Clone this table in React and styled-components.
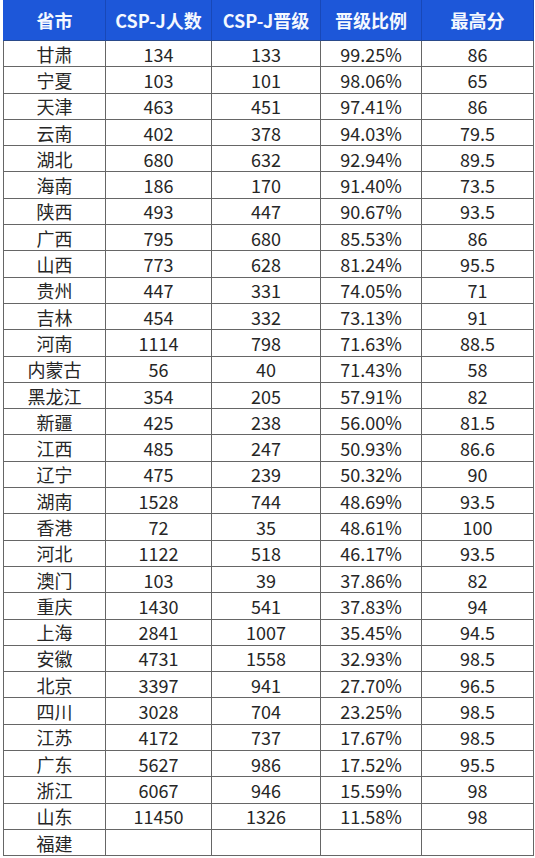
import React from "react"
import styled, { createGlobalStyle } from "styled-components"

const GlobalStyle = createGlobalStyle`
    body {
        margin: 0;
        background: white;
        font-family: "Noto Sans CJK SC", "Noto Sans", sans-serif;
    }
`

const rows = [
    ["甘肃", "134", "133", "99.25%", "86"],
    ["宁夏", "103", "101", "98.06%", "65"],
    ["天津", "463", "451", "97.41%", "86"],
    ["云南", "402", "378", "94.03%", "79.5"],
    ["湖北", "680", "632", "92.94%", "89.5"],
    ["海南", "186", "170", "91.40%", "73.5"],
    ["陕西", "493", "447", "90.67%", "93.5"],
    ["广西", "795", "680", "85.53%", "86"],
    ["山西", "773", "628", "81.24%", "95.5"],
    ["贵州", "447", "331", "74.05%", "71"],
    ["吉林", "454", "332", "73.13%", "91"],
    ["河南", "1114", "798", "71.63%", "88.5"],
    ["内蒙古", "56", "40", "71.43%", "58"],
    ["黑龙江", "354", "205", "57.91%", "82"],
    ["新疆", "425", "238", "56.00%", "81.5"],
    ["江西", "485", "247", "50.93%", "86.6"],
    ["辽宁", "475", "239", "50.32%", "90"],
    ["湖南", "1528", "744", "48.69%", "93.5"],
    ["香港", "72", "35", "48.61%", "100"],
    ["河北", "1122", "518", "46.17%", "93.5"],
    ["澳门", "103", "39", "37.86%", "82"],
    ["重庆", "1430", "541", "37.83%", "94"],
    ["上海", "2841", "1007", "35.45%", "94.5"],
    ["安徽", "4731", "1558", "32.93%", "98.5"],
    ["北京", "3397", "941", "27.70%", "96.5"],
    ["四川", "3028", "704", "23.25%", "98.5"],
    ["江苏", "4172", "737", "17.67%", "98.5"],
    ["广东", "5627", "986", "17.52%", "95.5"],
    ["浙江", "6067", "946", "15.59%", "98"],
    ["山东", "11450", "1326", "11.58%", "98"],
    ["福建", "", "", "", ""],
]

const headers = ["省市", "CSP-J人数", "CSP-J晋级", "晋级比例", "最高分"]

const Page = styled.div`
    padding-left: 3px;
`

const Grid = styled.div`
    display: grid;
    width: 531px;
    grid-template-columns: 103px 106px 109px 101px 112px;
    grid-template-rows: 41px repeat(31, 26.3px);
`

const Cell = styled.div`
    display: flex;
    align-items: center;
    justify-content: center;
    box-sizing: border-box;
    border-right: 1px solid #666;
    border-bottom: 1px solid #666;
    border-left: ${prop => prop.first && "1px solid #666"};
    font-size: 18px;
    color: #262626;
    white-space: nowrap;
`

const HeadCell = styled(Cell)`
    background: #1d57d9;
    color: #f4f8ff;
    font-weight: 700;
    font-size: 18px;
    border-right: 1px solid #1848b8;
    border-left: ${prop => prop.first && "1px solid #1d57d9"};
    border-bottom: 1px solid #2a4a8a;
`

function App() {
    return (
        <Page>
            <GlobalStyle />
            <Grid>
                {headers.map((h, i) => <HeadCell first={i === 0} key={h}>{h}</HeadCell>)}
                {rows.map(row => row.map((value, i) => (
                    <Cell first={i === 0} key={row[0] + i}>{value}</Cell>
                )))}
            </Grid>
        </Page>
    )
}

export default App
